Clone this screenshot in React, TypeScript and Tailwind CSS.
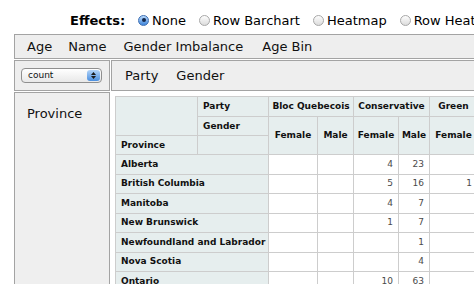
import React from "react";

function Radio({ checked }: { checked?: boolean }) {
  if (checked) {
    return (
      <span className="w-[11px] h-[11px] rounded-full border border-[#3d6eb3] bg-[linear-gradient(180deg,#b9dafc,#3f86dc)] flex items-center justify-center shrink-0">
        <span className="w-[4px] h-[4px] rounded-full bg-[#13264a]" />
      </span>
    );
  }
  return (
    <span className="w-[11px] h-[11px] rounded-full border border-[#a8a8a8] bg-[linear-gradient(180deg,#fdfdfd,#dcdcdc)] shrink-0" />
  );
}

function Option({ label, checked }: { label: string; checked?: boolean }) {
  return (
    <span className="flex items-center ml-[13px]">
      <Radio checked={checked} />
      <span className="ml-[3px]">{label}</span>
    </span>
  );
}

function SelectBox() {
  return (
    <div className="w-[81px] h-[15px] rounded-[4px] border border-[#8f8f8f] bg-[linear-gradient(180deg,#ffffff,#e8e8e8)] flex items-center justify-between pl-[6px] pr-[1px] text-[9px] leading-none text-[#111]">
      <span>count</span>
      <span className="w-[13px] h-[11px] rounded-[3px] bg-[linear-gradient(180deg,#b3d4f8,#4b8fe0)] flex flex-col items-center justify-center gap-[1px]">
        <svg width="5" height="3" viewBox="0 0 5 3">
          <path d="M0 3 L2.5 0 L5 3Z" fill="#1a1a1a" />
        </svg>
        <svg width="5" height="3" viewBox="0 0 5 3">
          <path d="M0 0 L2.5 3 L5 0Z" fill="#1a1a1a" />
        </svg>
      </span>
    </div>
  );
}

const colWidths = [82, 71, 49, 36, 45, 31, 48, 49, 36, 49, 36, 60];

type Row = { name: string; vals: (number | "")[] };

const rows: Row[] = [
  { name: "Alberta", vals: ["", "", 4, 23, "", "", "", "", 1, 28] },
  { name: "British Columbia", vals: ["", "", 5, 16, 1, "", 2, 4, 8, 36] },
  { name: "Manitoba", vals: ["", "", 4, 7, "", "", 1, 1, 1, 14] },
  { name: "New Brunswick", vals: ["", "", 1, 7, "", "", 1, "", 1, 10] },
  { name: "Newfoundland and Labrador", vals: ["", "", "", 1, "", "", 4, "", 2, 7] },
  { name: "Nova Scotia", vals: ["", "", "", 4, "", "", 4, 1, 2, 11] },
  { name: "Ontario", vals: ["", "", 10, 63, "", 1, 10, 6, 16, 106] },
  { name: "Prince Edward Island", vals: ["", "", "", 1, "", "", 3, "", "", 4] },
  { name: "Quebec", vals: ["", 4, 1, 4, "", "", 7, 24, 35, 75] },
];

const th =
  "bg-[#e6eeee] border border-[#cdcdcd] font-bold text-[#111] text-[9px] leading-none";

function PivotTable() {
  const total = colWidths.reduce((a, b) => a + b, 0);
  return (
    <table
      className="table-fixed border-collapse font-['DejaVu_Sans',sans-serif]"
      style={{ width: total }}
    >
      <colgroup>
        {colWidths.map((w, i) => (
          <col key={i} style={{ width: w }} />
        ))}
      </colgroup>
      <thead>
        <tr className="h-[20px]">
          <th className={th} rowSpan={2}></th>
          <th className={`${th} text-left pl-[5px]`}>Party</th>
          <th className={`${th} text-center px-[3px]`} colSpan={2}>Bloc Quebecois</th>
          <th className={`${th} text-center px-[3px]`} colSpan={2}>Conservative</th>
          <th className={`${th} text-center px-[3px]`}>Green</th>
          <th className={`${th} text-center px-[3px]`} colSpan={2}>Liberal</th>
          <th className={`${th} text-center px-[3px]`} colSpan={2}>NDP</th>
          <th className={`${th} text-center px-[3px]`} rowSpan={3}>Totals</th>
        </tr>
        <tr className="h-[19px]">
          <th className={`${th} text-left pl-[5px]`}>Gender</th>
          {["Female", "Male", "Female", "Male", "Female", "Female", "Male", "Female", "Male"].map((g, i) => (
            <th key={i} className={`${th} text-center px-[2px]`} rowSpan={2}>
              {g}
            </th>
          ))}
        </tr>
        <tr className="h-[19px]">
          <th className={`${th} text-left pl-[5px]`}>Province</th>
          <th className={th}></th>
        </tr>
      </thead>
      <tbody>
        {rows.map((r) => (
          <tr key={r.name} className="h-[19.5px]">
            <th className={`${th} text-left pl-[5px] whitespace-nowrap`} colSpan={2}>
              {r.name}
            </th>
            {r.vals.map((v, i) => (
              <td
                key={i}
                className="bg-white border border-[#cdcdcd] text-right pr-[5px] text-[9px] leading-none text-[#4a4a4a]"
              >
                {v}
              </td>
            ))}
          </tr>
        ))}
      </tbody>
    </table>
  );
}

export default function App() {
  return (
    <div className="w-[474px] h-[284px] overflow-hidden bg-white font-['DejaVu_Sans',sans-serif] text-[#111]">
      <div className="w-[560px]">
        <div className="h-[34px] pt-[6px] flex items-center pl-[70px] text-[13px] leading-none whitespace-nowrap text-black">
          <span className="font-bold">Effects:</span>
          <Option label="None" checked />
          <Option label="Row Barchart" />
          <Option label="Heatmap" />
          <Option label="Row Heatmap" />
          <Option label="Col Heatmap" />
        </div>
        <div className="ml-[14px] grid grid-cols-[96px_1fr] gap-[1px]">
          <div className="col-span-2 h-[25px] border border-[#a3a3a3] bg-[#eeeeee] flex items-center pl-[12px] text-[13px] whitespace-nowrap">
            <span>Age</span>
            <span className="ml-[16px]">Name</span>
            <span className="ml-[17px]">Gender Imbalance</span>
            <span className="ml-[19px]">Age Bin</span>
          </div>
          <div className="h-[31px] border border-[#a3a3a3] bg-[#eeeeee] flex items-center pl-[6px]">
            <SelectBox />
          </div>
          <div className="h-[31px] border border-[#a3a3a3] bg-[#eeeeee] flex items-center pl-[13px] text-[13px] whitespace-nowrap">
            <span>Party</span>
            <span className="ml-[18px]">Gender</span>
          </div>
          <div className="h-[220px] border border-[#a3a3a3] bg-[#efefef] pl-[12px] pt-[13px] text-[13px] leading-[15px]">
            Province
          </div>
          <div className="pl-[4px] pt-[4px]">
            <PivotTable />
          </div>
        </div>
      </div>
    </div>
  );
}
